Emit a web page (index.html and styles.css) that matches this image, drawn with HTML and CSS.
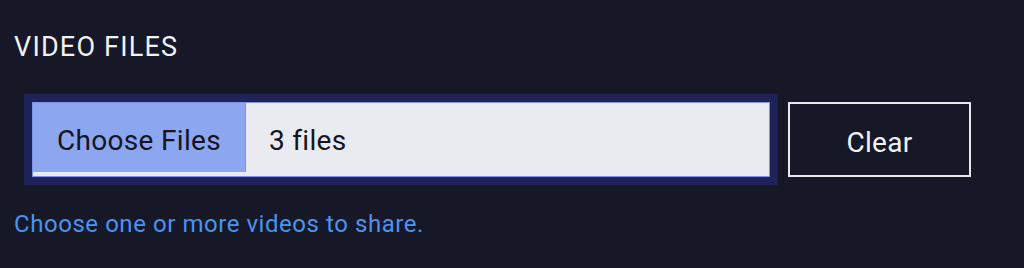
FILE: index.html
```html
<!DOCTYPE html>
<html lang="en">
<head>
<meta charset="utf-8">
<title>Video files</title>
<link rel="stylesheet" href="styles.css">
</head>
<body>
<section class="field">
  <h2 class="field-label">VIDEO FILES</h2>
  <div class="field-row">
    <div class="file-frame">
      <div class="file-input">
        <span class="file-button">Choose Files</span>
        <span class="file-status">3 files</span>
      </div>
    </div>
    <button class="clear-button" type="button">Clear</button>
  </div>
  <p class="field-help">Choose one or more videos to share.</p>
</section>
</body>
</html>
```

FILE: styles.css
```css
html, body {
  margin: 0;
  padding: 0;
  background: #161727;
  height: 100%;
}

body {
  font-family: Roboto, "Liberation Sans", sans-serif;
}

.field {
  padding: 31px 14px 0 14px;
}

.field-label {
  margin: 0;
  font-size: 27px;
  line-height: 32px;
  font-weight: 400;
  letter-spacing: 1.2px;
  color: #f2f2f4;
}

.field-row {
  display: flex;
  align-items: center;
  gap: 10px;
  margin-top: 31px;
  margin-left: 10px;
}

.file-frame {
  background: #1e2257;
  padding: 8px;
  display: flex;
}

.file-input {
  width: 736px;
  height: 73px;
  border: 1px solid #7e93e4;
  background: #e9ebf0;
  display: flex;
  align-items: flex-start;
}

.file-button {
  box-sizing: border-box;
  width: 213px;
  height: 69px;
  background: #8ca6f0;
  border-right: 1px solid #7a90e0;
  color: #14151f;
  font-size: 28px;
  letter-spacing: 0.3px;
  display: flex;
  align-items: center;
  justify-content: center;
  padding-top: 6px;
}

.file-status {
  height: 69px;
  display: flex;
  align-items: center;
  padding-left: 23px;
  padding-top: 6px;
  box-sizing: border-box;
  font-size: 28px;
  letter-spacing: 0.3px;
  color: #14151f;
}

.clear-button {
  box-sizing: border-box;
  width: 183px;
  height: 75px;
  border: 2px solid #e8e8ec;
  background: #161727;
  color: #f2f2f4;
  font-family: Roboto, "Liberation Sans", sans-serif;
  font-size: 28px;
  letter-spacing: 0.3px;
  padding: 5px 0 0 0;
  cursor: pointer;
}

.field-help {
  margin: 24px 0 0 0;
  font-size: 24px;
  line-height: 30px;
  letter-spacing: 0.55px;
  color: #4b93ee;
}
```
